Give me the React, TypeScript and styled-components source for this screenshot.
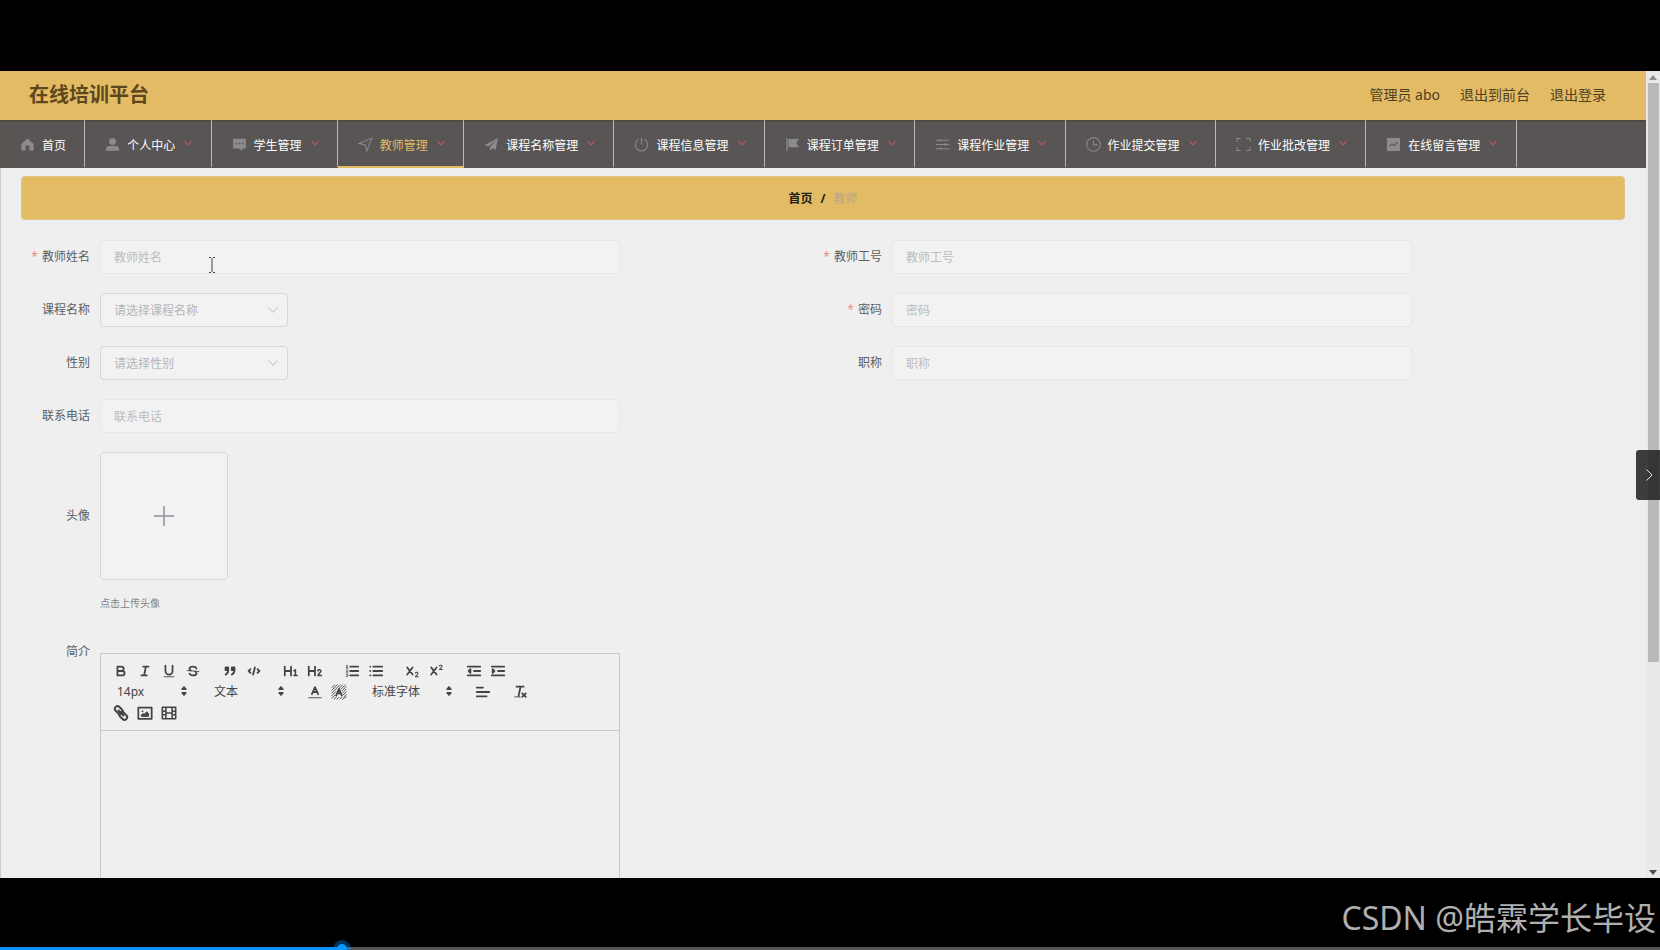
import React, { useState } from 'react';
import styled, { createGlobalStyle, css } from 'styled-components';

const GlobalStyle = createGlobalStyle`
  *, *::before, *::after { box-sizing: border-box; }
  body {
    margin: 0;
    background: #000;
    font-family: "Noto Sans", "Noto Sans CJK SC", sans-serif;
    font-size: 12px;
    color: #5c5e62;
  }
  button, input, select, textarea { font: inherit; color: inherit; }
  a { color: inherit; text-decoration: none; }
`;

/* ---------- player ---------- */

const Player = styled.div`
  position: relative;
  display: flex;
  flex-direction: column;
  height: 100vh;
  padding-top: 71px;
  overflow: hidden;
`;

const Screen = styled.div`
  flex: 1;
  min-height: 0;
  display: flex;
  overflow: hidden;
  background: #edeef0;
`;

const PlayerFooter = styled.footer`
  height: 69px;
  flex: none;
  display: flex;
  justify-content: flex-end;
  align-items: center;
  padding: 10px 4px 0 0;
  background: #000;
`;

const Watermark = styled.span`
  font-size: 32px;
  line-height: 40px;
  color: #b0b0b0;
  white-space: nowrap;
`;

const Seek = styled.input<{ $played: number }>`
  appearance: none;
  display: block;
  flex: none;
  width: 100%;
  height: 3px;
  margin: 0;
  background: linear-gradient(to right, #0a93ff ${p => p.$played}%, #555 ${p => p.$played}%);
  &::-webkit-slider-thumb {
    appearance: none;
    width: 10px;
    height: 10px;
    border-radius: 50%;
    background: #0a98ff;
    box-shadow: 0 0 0 4px rgba(10, 147, 255, 0.35);
  }
`;

const SideTab = styled.button`
  position: absolute;
  right: 0;
  top: calc(50% - 25px);
  width: 24px;
  height: 50px;
  padding: 0 0 0 2px;
  display: flex;
  align-items: center;
  justify-content: center;
  border: 0;
  border-radius: 3px 0 0 3px;
  background: rgba(34, 36, 35, 0.88);
  color: #e6e6e6;
`;

/* ---------- scrollbar ---------- */

const ScrollBar = styled.div`
  flex: none;
  width: 14px;
  display: flex;
  flex-direction: column;
  align-items: center;
  background: #e9e9ea;
`;

const ScrollButton = styled.button`
  width: 14px;
  height: 12px;
  padding: 0;
  border: 0;
  background: none;
  display: flex;
  align-items: center;
  justify-content: center;
`;

const ScrollTrack = styled.div`
  flex: 1;
  width: 11px;
`;

const ScrollThumb = styled.div`
  height: 74%;
  background: #b9b9b9;
`;

/* ---------- site ---------- */

const Site = styled.div`
  flex: 1;
  min-width: 0;
  overflow: hidden;
`;

const Header = styled.header`
  height: 49px;
  display: flex;
  align-items: center;
  justify-content: space-between;
  padding: 0 40px 2px 29px;
  background: #e3bb65;
`;

const Brand = styled.h1`
  margin: 0;
  font-size: 20px;
  line-height: 28px;
  font-weight: 700;
  color: #5e471c;
`;

const Account = styled.div`
  display: flex;
  gap: 20px;
  font-size: 14px;
  line-height: 20px;
  color: #4f4124;
`;

const Nav = styled.nav`
  height: 48px;
  display: grid;
  grid-template-columns: 85fr repeat(3, 126fr) repeat(7, 150fr) 129fr;
  background: #585554;
  box-shadow: inset 0 2px 2px -1px rgba(60, 45, 20, 0.5);
`;

const NavItem = styled.a<{ $active?: boolean }>`
  display: flex;
  align-items: center;
  padding: 2px 0 0 20px;
  border-right: 1px solid #b9b8b7;
  border-bottom: 2px solid ${p => (p.$active ? '#e3bb65' : 'transparent')};
  color: ${p => (p.$active ? '#e3bb65' : '#fff')};
  line-height: 18px;
  white-space: nowrap;
  > svg:first-child { margin-right: 7px; color: #8a8a8f; flex: none; }
  > span { padding-top: 3px; }
  > svg:last-child { margin: 0 0 2px 9px; color: #b5546a; flex: none; }
`;

const Body = styled.main`
  padding: 8px 21px 0 20px;
  border-left: 1px solid #cfcfd2;
`;

const Crumbs = styled.nav`
  height: 44px;
  display: flex;
  align-items: center;
  justify-content: center;
  gap: 8px;
  padding-top: 1px;
  border: 1px solid #e2c680;
  border-radius: 4px;
  background: #e3bb65;
  line-height: 18px;
  color: #b3a68a;
  a, b { font-weight: 700; color: #201c14; }
`;

const Form = styled.form`
  display: grid;
  grid-template-columns: 1fr 1fr;
  row-gap: 19px;
  margin-top: 10px;
  padding: 10px 20px 20px 0;
  background: #efefef;
`;

const Field = styled.div<{ $col?: number }>`
  grid-column: ${p => p.$col ?? 1};
  display: flex;
  align-items: flex-start;
`;

const Label = styled.label<{ $required?: boolean; $tall?: boolean }>`
  flex: none;
  width: 79px;
  padding-right: 10px;
  text-align: right;
  line-height: ${p => (p.$tall ? 128 : 34)}px;
  ${p => p.$required && css`
    &::before { content: '*'; margin-right: 4px; color: #ea8f86; }
  `}
`;

const Control = styled.div`
  flex: 1;
  min-width: 0;
  position: relative;
`;

const TextInput = styled.input`
  display: block;
  width: 73%;
  height: 34px;
  padding: 0 13px;
  border: 1px solid #e6e6e7;
  border-radius: 4px;
  background: #f2f2f2;
  outline: none;
  &::placeholder { color: #bcbdc0; opacity: 1; }
`;

const SelectWrap = styled.div`
  position: relative;
  width: 188px;
  > svg { position: absolute; right: 10px; top: 12px; color: #b8babf; pointer-events: none; }
`;

const Select = styled.select`
  appearance: none;
  display: block;
  width: 100%;
  height: 34px;
  padding: 0 30px 0 13px;
  border: 1px solid #d6d7da;
  border-radius: 4px;
  background: #f2f2f2;
  color: #b5b6ba;
  outline: none;
`;

const Upload = styled.button`
  width: 128px;
  height: 128px;
  display: flex;
  align-items: center;
  justify-content: center;
  padding: 0;
  border: 1px solid #d9d9db;
  border-radius: 4px;
  background: #f2f2f2;
  color: #8c939d;
`;

const Tip = styled.p`
  margin: 0;
  padding-top: 10px;
  font-size: 10px;
  line-height: 26px;
  color: #7f8287;
`;

const Pointer = styled.svg`
  position: absolute;
  left: 108px;
  top: 17px;
  pointer-events: none;
`;

/* ---------- rich text editor ---------- */

const Editor = styled.div`
  width: 73%;
  margin-top: 18px;
  border: 1px solid #c8c8c9;
`;

const Toolbar = styled.div`
  display: flex;
  flex-wrap: wrap;
  padding: 6px 8px 7px;
  border-bottom: 1px solid #c8c8c9;
  color: #444;
`;

const Group = styled.span`
  display: flex;
  margin-right: 13px;
`;

const Tool = styled.button`
  width: 24px;
  height: 21px;
  padding: 0;
  display: flex;
  align-items: center;
  justify-content: center;
  border: 0;
  background: none;
`;

const Picker = styled.span<{ $wide?: boolean }>`
  position: relative;
  width: ${p => (p.$wide ? 94 : 84)}px;
  select {
    appearance: none;
    width: 100%;
    height: 21px;
    padding: 0 18px 0 8px;
    border: 0;
    background: none;
    outline: none;
  }
  svg { position: absolute; right: 1px; top: 2px; pointer-events: none; }
`;

const Draft = styled.textarea`
  display: block;
  width: 100%;
  height: 350px;
  padding: 12px;
  border: 0;
  background: none;
  outline: none;
  resize: none;
`;

/* ---------- icons ---------- */

const MenuGlyph = ({ children }: { children: React.ReactNode }) => (
  <svg width="15" height="15" viewBox="0 0 16 16" fill="none" stroke="currentColor" strokeWidth="1.1" aria-hidden="true">
    {children}
  </svg>
);

const menuGlyphs: Record<string, React.ReactNode> = {
  home: <path fill="currentColor" stroke="none" d="M8 1.6 14.6 7.4V14.4H10V10.2Q10 9 8.9 9H7.1Q6 9 6 10.2V14.4H1.4V7.4Z" />,
  user: <path fill="currentColor" stroke="none" d="M8 1.2A3.7 3.7 0 1 1 8 8.6 3.7 3.7 0 0 1 8 1.2ZM4.5 9.6H11.5Q14.8 9.8 14.9 13V14.6H1.1V13Q1.2 9.8 4.5 9.6Z" />,
  comment: <path fill="currentColor" fillRule="evenodd" stroke="none" d="M1.2 1.8H14.8V12.2H11V15L7.4 12.2H1.2ZM3.8 6.2V7.8H5.4V6.2ZM7.2 6.2V7.8H8.8V6.2ZM10.6 6.2V7.8H12.2V6.2Z" />,
  position: <path d="M14.8 1.2 1.2 6.8 7.6 8.4 9.4 14.8Z" />,
  promotion: <path fill="currentColor" stroke="none" d="M15 1 .8 8.6 4.5 10.2 12.8 3.6 6.2 10.8 6.2 15 8.6 12 12.4 13.6Z" />,
  power: <path d="M8 1V8M5.2 2.3A6.6 6.6 0 1 0 10.8 2.3" />,
  flag: <path fill="currentColor" stroke="none" d="M1.4 1H2.8V15H1.4ZM3.6 2H14.6L12 6.4 14.8 11H3.6Z" />,
  operation: <path d="M1 3.5H15M1 8H15M1 12.5H15M5 2V5M11 6.5V9.5M6 11V14" />,
  time: <><circle cx="8" cy="8" r="7.2" /><path d="M8 3.6V8.4H12.2" /></>,
  full: <path d="M1 5V1.5H5M11 1.5H15V5M15 11V14.5H11M5 14.5H1V11" />,
  chart: <><rect x="1" y="1" width="14" height="14" fill="currentColor" stroke="none" /><path stroke="#585554" d="M3.6 10 6.3 7.2 8.5 9.2 12.4 5.6" /></>,
};

const Chevron = ({ size = 8 }: { size?: number }) => (
  <svg width={size} height={size} viewBox="0 0 10 10" fill="none" stroke="currentColor" strokeWidth={size > 8 ? 1 : 1.5} aria-hidden="true">
    <path d="M.5 2.5 5 7.3 9.5 2.5" />
  </svg>
);

const Arrows = () => (
  <svg width="16" height="16" viewBox="0 0 18 18" fill="currentColor" stroke="currentColor" strokeWidth="2" strokeLinejoin="round" aria-hidden="true">
    <path d="M7 7 9 4.6 11 7ZM7 11 9 13.4 11 11Z" />
  </svg>
);

const ToolGlyph = ({ children }: { children: React.ReactNode }) => (
  <svg width="16" height="16" viewBox="0 0 18 18" fill="none" stroke="currentColor" strokeWidth="2" strokeLinecap="round" strokeLinejoin="round" aria-hidden="true">
    {children}
  </svg>
);

const toolGlyphs: Record<string, React.ReactNode> = {
  bold: <path d="M5 4H9.5A2.5 2.5 0 0 1 9.5 9H5ZM5 9H10.5A2.5 2.5 0 0 1 10.5 14H5Z" />,
  italic: <path d="M7 4H13M5 14H11M8 14 10 4" />,
  underline: <><path d="M5 3V9A4 4 0 0 0 13 9V3" /><path strokeWidth="1" d="M3.5 15.5H14.5" /></>,
  strike: <><path d="M12.9 6C12.4 4.8 10.8 4 9 4 6.7 4 5 5.1 5 6.5 5 7.5 5.5 8 6.5 8.3M5.1 12C5.6 13.2 7.2 14 9 14 11.3 14 13 12.9 13 11.5 13 10.5 12.5 10 11.5 9.7" /><path strokeWidth="1" d="M2.5 8.5 15.5 9.5" /></>,
  quote: <><path fill="currentColor" d="M4 5H7V8H4ZM11 5H14V8H11Z" /><path d="M7 8C7 12 4 13 4 13M14 8C14 12 11 13 11 13" /></>,
  code: <path d="M5 7 3 9 5 11M13 7 15 9 13 11M10 5 8 13" />,
  h1: <><path d="M2 4V14M9 4V14M2 9H9" /><path strokeWidth="1.7" d="M12.2 8.8 14 7.6V14M12.2 14H16" /></>,
  h2: <><path d="M2 4V14M9 4V14M2 9H9" /><path strokeWidth="1.7" d="M12.2 8.6C12.7 7.2 15.8 7.3 15.6 9.3 15.4 10.8 12.8 12 12.3 14H16.2" /></>,
  ordered: <><path d="M7 4H16M7 9H16M7 14H16" /><path strokeWidth="1" d="M2.5 3 3.5 2.5V5.5M2.5 5.5H4.5M2.5 8C3 7.3 4.6 7.5 4.3 8.5L2.5 10.3H4.5M2.5 12.5H4.3L3.5 13.7C5 13.7 4.8 15.6 2.5 15.3" /></>,
  bullet: <path d="M6 4H16M6 9H16M6 14H16M2.5 4H2.6M2.5 9H2.6M2.5 14H2.6" />,
  sub: <><path d="M2.5 5 8.5 13M8.5 5 2.5 13" /><path strokeWidth="1.2" d="M11.7 11.3C12.2 10 14.8 10.2 14.5 12 14.3 13.3 12.2 14 11.8 15.4H15" /></>,
  sup: <><path d="M2.5 5 8.5 13M8.5 5 2.5 13" /><path strokeWidth="1.2" d="M11.7 3.3C12.2 2 14.8 2.2 14.5 4 14.3 5.3 12.2 6 11.8 7.4H15" /></>,
  outdent: <><path d="M2 14H16M2 4H16M9 9H16" /><path fill="currentColor" d="M5 7V11L3 9Z" /></>,
  indent: <><path d="M2 14H16M2 4H16M9 9H16" /><path fill="currentColor" d="M3 7V11L5 9Z" /></>,
  color: <><path strokeWidth="1" d="M2 15.5H16" /><path d="M5.5 11.5 9 3.5 12.5 11.5M6.9 9H11.1" /></>,
  background: (
    <>
      <path
        strokeWidth="1"
        d="M1 4 4 1M1 7 7 1M1 10 10 1M1 13 5.5 8.5M1 16 4.500 12.500M9.500 4.500 13 1M11.500 5.500 16 1M12.500 7.500 17 3M13.500 9.500 17 6M14 12 17 9M14.500 14.500 17 12M3.500 17 6 15M7 17 9 15M10 17 12 15M13 17 17 14.500"
      />
      <path d="M5.800 13 9 5.500 12.200 13M7 10.500H11" />
    </>
  ),
  align: <path d="M2 9H16M2 14H13M2 4H9" />,
  clean: <><path d="M5 3H13M9.6 3 7.4 13.5M11.5 10.5 15.5 14.5M15.5 10.5 11.5 14.5" /><path strokeWidth="1" d="M3 14.5H9" /></>,
  link: (
    <g transform="rotate(45 9 9)" strokeWidth="2.2">
      <rect x="0" y="5.500" width="10" height="6" rx="3" />
      <rect x="8" y="6.500" width="10" height="6" rx="3" />
      <path d="M5 9H13" />
    </g>
  ),
  image: <><rect x="1.500" y="3" width="15" height="12.500" strokeWidth="2" /><circle cx="6" cy="7" r=".6" strokeWidth="1" /><path fill="currentColor" strokeWidth="1" d="M5 12.500V11L7 9.500 8 10.500 11 7.500 13 9.500V12.500Z" /></>,
  video: <path strokeWidth="1.800" d="M1.500 2.500H16.500V15.500H1.500ZM5.500 2.500V15.500M12.500 2.500V15.500M5.500 9H12.500M2 7H5M2 11H5M13 7H16M13 11H16" />,
};

/* ---------- data ---------- */

const menu = [
  { icon: 'home', text: '首页' },
  { icon: 'user', text: '个人中心' },
  { icon: 'comment', text: '学生管理' },
  { icon: 'position', text: '教师管理', active: true },
  { icon: 'promotion', text: '课程名称管理' },
  { icon: 'power', text: '课程信息管理' },
  { icon: 'flag', text: '课程订单管理' },
  { icon: 'operation', text: '课程作业管理' },
  { icon: 'time', text: '作业提交管理' },
  { icon: 'full', text: '作业批改管理' },
  { icon: 'chart', text: '在线留言管理' },
];

const Tools = ({ names }: { names: string[] }) => (
  <Group>
    {names.map(n => (
      <Tool type="button" key={n} aria-label={n}>
        <ToolGlyph>{toolGlyphs[n]}</ToolGlyph>
      </Tool>
    ))}
  </Group>
);

const ToolPicker = ({ label, value, wide }: { label: string; value: string; wide?: boolean }) => (
  <Group>
    <Picker $wide={wide}>
      <select aria-label={label}><option>{value}</option></select>
      <Arrows />
    </Picker>
  </Group>
);

interface TextFieldProps {
  id: string;
  label: string;
  col?: number;
  required?: boolean;
  type?: string;
  children?: React.ReactNode;
}

const TextField = ({ id, label, col, required, type = 'text', children }: TextFieldProps) => (
  <Field $col={col}>
    <Label htmlFor={id} $required={required}>{label}</Label>
    <Control>
      <TextInput id={id} type={type} placeholder={label} />
      {children}
    </Control>
  </Field>
);

const SelectField = ({ id, label }: { id: string; label: string }) => (
  <Field>
    <Label htmlFor={id}>{label}</Label>
    <Control>
      <SelectWrap>
        <Select id={id}><option>{'请选择' + label}</option></Select>
        <Chevron size={10} />
      </SelectWrap>
    </Control>
  </Field>
);

export default function App() {
  const [played, setPlayed] = useState(204);
  return (
    <>
      <GlobalStyle />
      <Player>
        <Screen>
          <Site>
            <Header>
              <Brand>在线培训平台</Brand>
              <Account>
                <span>管理员 abo</span>
                <a href="#front">退出到前台</a>
                <a href="#logout">退出登录</a>
              </Account>
            </Header>
            <Nav>
              {menu.map(m => (
                <NavItem key={m.text} href={'#' + m.icon} $active={m.active}>
                  <MenuGlyph>{menuGlyphs[m.icon]}</MenuGlyph>
                  <span>{m.text}</span>
                  {m.icon !== 'home' && <Chevron />}
                </NavItem>
              ))}
            </Nav>
            <Body>
              <Crumbs>
                <a href="#home">首页</a>
                <b>/</b>
                <span>教师</span>
              </Crumbs>
              <Form>
                <TextField id="name" label="教师姓名" required>
                  <Pointer width="8" height="16" viewBox="0 0 8 16" fill="none" stroke="#444">
                    <path d="M1 .5H3M5 .5H7M1 15.5H3M5 15.5H7M4 1V15" />
                  </Pointer>
                </TextField>
                <TextField id="number" label="教师工号" col={2} required />
                <SelectField id="course" label="课程名称" />
                <TextField id="password" label="密码" col={2} type="password" required />
                <SelectField id="gender" label="性别" />
                <TextField id="rank" label="职称" col={2} />
                <TextField id="phone" label="联系电话" />
                <Field>
                  <Label htmlFor="avatar" $tall>头像</Label>
                  <Control>
                    <Upload id="avatar" type="button">
                      <svg width="20" height="20" viewBox="0 0 20 20" stroke="currentColor" strokeWidth="1.5" aria-hidden="true">
                        <path d="M10 0V20M0 10H20" />
                      </svg>
                    </Upload>
                    <Tip>点击上传头像</Tip>
                  </Control>
                </Field>
                <Field>
                  <Label htmlFor="intro">简介</Label>
                  <Control>
                    <Editor>
                      <Toolbar>
                        <Tools names={['bold', 'italic', 'underline', 'strike']} />
                        <Tools names={['quote', 'code']} />
                        <Tools names={['h1', 'h2']} />
                        <Tools names={['ordered', 'bullet']} />
                        <Tools names={['sub', 'sup']} />
                        <Tools names={['outdent', 'indent']} />
                        <ToolPicker label="字号" value="14px" />
                        <ToolPicker label="标题" value="文本" />
                        <Tools names={['color', 'background']} />
                        <ToolPicker label="字体" value="标准字体" wide />
                        <Tools names={['align']} />
                        <Tools names={['clean']} />
                        <Tools names={['link', 'image', 'video']} />
                      </Toolbar>
                      <Draft id="intro" />
                    </Editor>
                  </Control>
                </Field>
              </Form>
            </Body>
          </Site>
          <ScrollBar>
            <ScrollButton type="button" aria-label="向上滚动">
              <svg width="8" height="5" viewBox="0 0 8 5" fill="#8d8d8d"><path d="M4 0 8 5H0Z" /></svg>
            </ScrollButton>
            <ScrollTrack><ScrollThumb /></ScrollTrack>
            <ScrollButton type="button" aria-label="向下滚动">
              <svg width="8" height="5" viewBox="0 0 8 5" fill="#505050"><path d="M0 0H8L4 5Z" /></svg>
            </ScrollButton>
          </ScrollBar>
        </Screen>
        <SideTab type="button" aria-label="展开">
          <svg width="7" height="12" viewBox="0 0 7 12" fill="none" stroke="currentColor" aria-hidden="true">
            <path d="M.5 .5 6 6 .5 11.5" />
          </svg>
        </SideTab>
        <PlayerFooter>
          <Watermark>CSDN @皓霖学长毕设</Watermark>
        </PlayerFooter>
        <Seek
          type="range"
          aria-label="播放进度"
          min={0}
          max={1000}
          value={played}
          onChange={e => setPlayed(Number(e.target.value))}
          $played={played / 10}
        />
      </Player>
    </>
  );
}
